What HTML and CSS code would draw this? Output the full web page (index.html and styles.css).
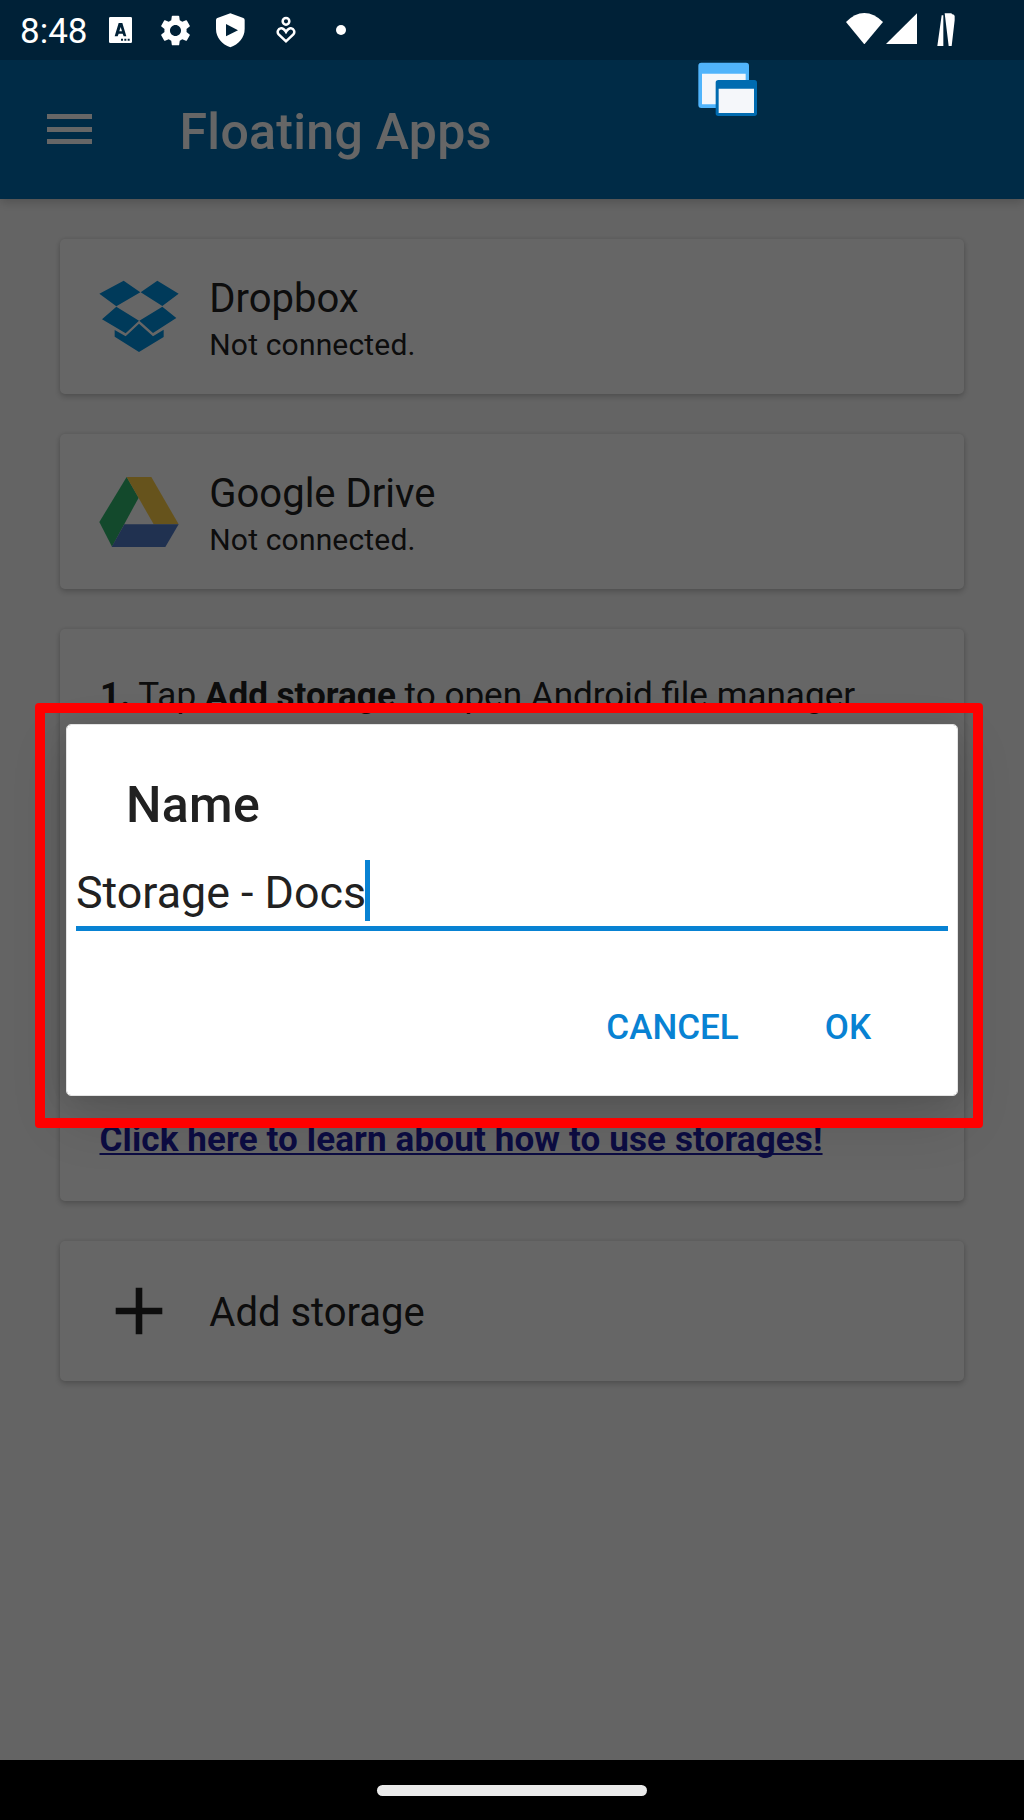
FILE: index.html
```html
<!DOCTYPE html>
<html lang="en">
<head>
<meta charset="utf-8">
<title>Floating Apps</title>
<link rel="stylesheet" href="styles.css">
</head>
<body>
<div class="screen">
  <header class="status-bar">
    <span class="clock">8:48</span>
    <svg class="st-keyboard" width="23" height="26" viewBox="327 51 69 78"><path fill="#fff" fill-rule="evenodd" d="M331 51H392Q396 51 396 55V125Q396 129 392 129H331Q327 129 327 125V55Q327 51 331 51ZM344 109H353L356 101H368L371 109H379L367 69H356ZM358 94L362 81L366 94ZM363 116V122H369V116ZM373 116V122H379V116ZM383 116V122H389V116Z"/></svg>
    <svg class="st-gear" width="37" height="37" viewBox="0 0 24 24"><path fill="#fff" d="M19.14 12.94c.04-.3.06-.61.06-.94 0-.32-.02-.64-.07-.94l2.03-1.58a.49.49 0 0 0 .12-.61l-1.92-3.32a.488.488 0 0 0-.59-.22l-2.39.96c-.5-.38-1.03-.7-1.62-.94l-.36-2.54a.484.484 0 0 0-.48-.41h-3.84c-.24 0-.43.17-.47.41l-.36 2.54c-.59.24-1.13.57-1.62.94l-2.39-.96c-.22-.08-.47 0-.59.22L2.74 8.87c-.12.21-.08.47.12.61l2.03 1.58c-.05.3-.09.63-.09.94s.02.64.07.94l-2.03 1.58a.49.49 0 0 0-.12.61l1.92 3.32c.12.22.37.29.59.22l2.39-.96c.5.38 1.03.7 1.62.94l.36 2.54c.05.24.24.41.48.41h3.84c.24 0 .44-.17.47-.41l.36-2.54c.59-.24 1.13-.56 1.62-.94l2.39.96c.22.08.47 0 .59-.22l1.92-3.32c.12-.22.07-.47-.12-.61l-2.01-1.58zM12 15.6c-1.98 0-3.6-1.62-3.6-3.6s1.62-3.6 3.6-3.6 3.6 1.62 3.6 3.6-1.62 3.6-3.6 3.6z"/></svg>
    <svg class="st-shield" width="29" height="35" viewBox="648 38 87 105"><path fill="#fff" fill-rule="evenodd" d="M691 39L730 53Q734 55 734 59V86C734 112 716 132 691 141C666 132 648 112 648 86V59Q648 55 652 53ZM678 71V108L714 90Z"/></svg>
    <svg class="st-heart" width="20" height="28" viewBox="826 48 60 84"><g fill="none" stroke="#fff" stroke-width="7.5"><circle cx="856" cy="64" r="10"/><path d="M856 124L834 103C828 96 832 86 841 85C849 84 852 90 856 96C860 90 863 84 871 85C880 86 884 96 878 103Z"/></g></svg>
    <span class="st-dot"></span>
    <span class="st-space"></span>
    <svg class="st-wifi" width="37" height="31" viewBox="497 39 111 93"><path fill="#fff" d="M497 66Q523 39 552 39T608 66L552 133Z"/></svg>
    <svg class="st-cell" width="31" height="31" viewBox="617 40 93 93"><path fill="#fff" d="M617 133H711V40Z"/></svg>
    <svg class="st-battery" width="18" height="33" viewBox="769 38 54 99"><path fill="#fff" d="M783 45H788V137H770ZM792 39H813V41Q822 43 822 47V60L813 137H804Z"/></svg>
  </header>

  <nav class="app-bar">
    <div class="menu"><i></i><i></i><i></i></div>
    <h1 class="app-title">Floating Apps</h1>
  </nav>

  <main class="content">
    <section class="card service">
      <svg class="service-icon" width="80" height="73" viewBox="148 150 240 219"><path class="dropbox" d="M222 152L272 187L200 229L149 191ZM323 152L387 191L338 228L273 187ZM200 230L268 272L228 310L157 268ZM338 230L380 264L310 309L269 272ZM268 281L310 319L342 299V321L268 366L195 320V300L228 319Z"/></svg>
      <div class="service-text"><div class="item-title">Dropbox</div><div class="item-sub">Not connected.</div></div>
    </section>
    <section class="card service">
      <svg class="service-icon drive" width="80" height="72" viewBox="148 138 240 216"><path fill="#31b66f" d="M231 141L267 203L187 350L149 276Z"/><path fill="#ffcf48" d="M231 141H305L387 283H312Z"/><path fill="#517bc9" d="M224 283H387L347 351H186Z"/></svg>
      <div class="service-text"><div class="item-title">Google Drive</div><div class="item-sub">Not connected.</div></div>
    </section>
    <section class="card help">
      <p class="step"><b>1.</b> Tap <b>Add storage</b> to open Android file manager</p>
      <p class="learn"><a class="learn-link">Click here to learn about how to use storages!</a></p>
    </section>
    <section class="card add">
      <svg class="add-icon" width="80" height="80" viewBox="0 0 80 80"><path fill="#212121" d="M36.7 16.7H43.3V36.7H63.3V43.3H43.3V63.3H36.7V43.3H16.7V36.7H36.7Z"/></svg>
      <div class="item-title add-label">Add storage</div>
    </section>
  </main>

  <footer class="nav-bar"><span class="home-pill"></span></footer>

  <div class="scrim"></div>
  <svg class="floating-icon" width="60" height="56" viewBox="54 186 180 168"><rect x="55" y="188" width="152" height="136" rx="9" fill="#50b4fb"/><path fill="#f5f7fa" d="M66 221H197V313H66Z"/><rect x="107" y="240" width="124" height="108" rx="8" fill="#006bb0"/><path fill="#f5f7fa" d="M116 266H222V339H116Z"/></svg>
  <div class="dialog">
    <h2 class="dialog-title">Name</h2>
    <div class="field"><span class="field-text">Storage - Docs</span><span class="caret"></span></div>
    <div class="actions"><span class="action">CANCEL</span><span class="action ok">OK</span></div>
  </div>
  <div class="highlight"></div>
</div>
</body>
</html>
```

FILE: styles.css
```css
* { box-sizing: border-box; }
body { margin: 0; font-family: Roboto, "Liberation Sans", sans-serif; color: #212121; }
h1, h2, p { margin: 0; font-weight: 400; }
svg { display: block; flex: none; }

.screen { position: relative; display: flex; flex-direction: column; width: 1024px; height: 1820px; overflow: hidden; background: #fafafa; }

.status-bar { position: relative; z-index: 3; display: flex; align-items: flex-start; height: 60px; flex: none; background: #002137; color: #fff; }
.clock { width: 88px; padding-left: 20px; margin-top: 11px; font-size: 35px; line-height: 41px; white-space: nowrap; }
.st-keyboard { margin: 17px 0 0 21px; }
.st-gear { margin: 11.5px 0 0 25px; }
.st-shield { margin: 13px 0 0 22px; }
.st-heart { margin: 16px 0 0 30.5px; }
.st-dot { width: 10px; height: 10px; margin: 24.5px 0 0 40px; border-radius: 50%; background: #fff; }
.st-space { flex: 1; }
.st-wifi { margin: 13px 3px 0 0; }
.st-cell { margin: 13.3px 20px 0 0; }
.st-battery { margin: 12.7px 69.5px 0 0; }

.app-bar { position: relative; display: flex; height: 139px; flex: none; background: #006db0; color: #fff; box-shadow: 0 3px 10px rgba(0, 0, 0, .2); }
.menu { display: flex; flex-direction: column; gap: 7.5px; width: 45px; margin: 54.3px 0 0 47px; }
.menu i { height: 5px; background: #fff; }
.app-title { margin: 41.5px 0 0 87.5px; font-size: 50px; line-height: 60px; font-weight: 500; letter-spacing: .3px; white-space: nowrap; }

.content { display: flex; flex-direction: column; gap: 40px; flex: 1; padding: 39.5px 60px 0; }
.card { flex: none; border-radius: 5px; background: #fff; box-shadow: 0 3px 6px rgba(0, 0, 0, .18), 0 0 4px rgba(0, 0, 0, .1); }
.service { display: flex; height: 155.3px; padding-left: 39.3px; }
.service-icon { margin-top: 41px; }
.drive { margin-top: 42px; }
.dropbox { fill: #0091e2; }
.service-text { margin: 36px 0 0 30px; }
.item-title { font-size: 40px; line-height: 48px; white-space: nowrap; }
.item-sub { margin-top: 4.5px; font-size: 30px; line-height: 36px; letter-spacing: .17px; white-space: nowrap; }
.help { display: flex; flex-direction: column; justify-content: space-between; height: 571.6px; padding: 45.3px 40px 40px; font-size: 35.1px; line-height: 42px; white-space: nowrap; }
.learn { margin-left: -.5px; font-size: 35px; }
.learn-link { color: #1e1ea5; font-weight: 700; letter-spacing: .13px; text-decoration: underline; text-decoration-thickness: 2px; text-underline-offset: 2px; text-decoration-skip-ink: none; }
.add { display: flex; align-items: center; gap: 30px; height: 140px; padding-left: 39.3px; }
.add-label { padding-top: 4px; }

.nav-bar { position: relative; z-index: 3; display: flex; justify-content: center; height: 60px; flex: none; padding-top: 25px; background: #000; }
.home-pill { width: 270px; height: 10.5px; border-radius: 6px; background: #ebebeb; }

.scrim { position: absolute; inset: 0; z-index: 1; background: rgba(0, 0, 0, .6); }
.floating-icon { position: absolute; left: 698px; top: 62px; z-index: 4; }

.dialog { position: absolute; left: 66px; top: 724px; z-index: 2; width: 892px; height: 372px; padding: 50px 9px 0; border: 1px solid #e4e4e4; border-radius: 5px; background: #fff; box-shadow: 0 22px 55px rgba(0, 0, 0, .15), 0 0 26px rgba(0, 0, 0, .1); background-clip: padding-box; }
.dialog-title { margin-left: 50px; font-size: 50px; line-height: 60px; font-weight: 500; letter-spacing: .3px; }
.field { display: flex; height: 96px; border-bottom: 5px solid #0882d3; font-size: 44.8px; line-height: 54px; }
.field-text { margin-top: 31px; white-space: nowrap; }
.caret { width: 5px; height: 61px; margin: 25px 0 0 -1px; background: #0882d3; }
.actions { display: flex; justify-content: flex-end; margin-top: 76px; padding-right: 77px; font-size: 35px; line-height: 42px; font-weight: 500; color: #0882d3; }
.ok { margin-left: 86px; }

.highlight { position: absolute; left: 35px; top: 703px; z-index: 5; width: 948px; height: 425px; border: 10.5px solid #f00; border-radius: 4px; }
```
